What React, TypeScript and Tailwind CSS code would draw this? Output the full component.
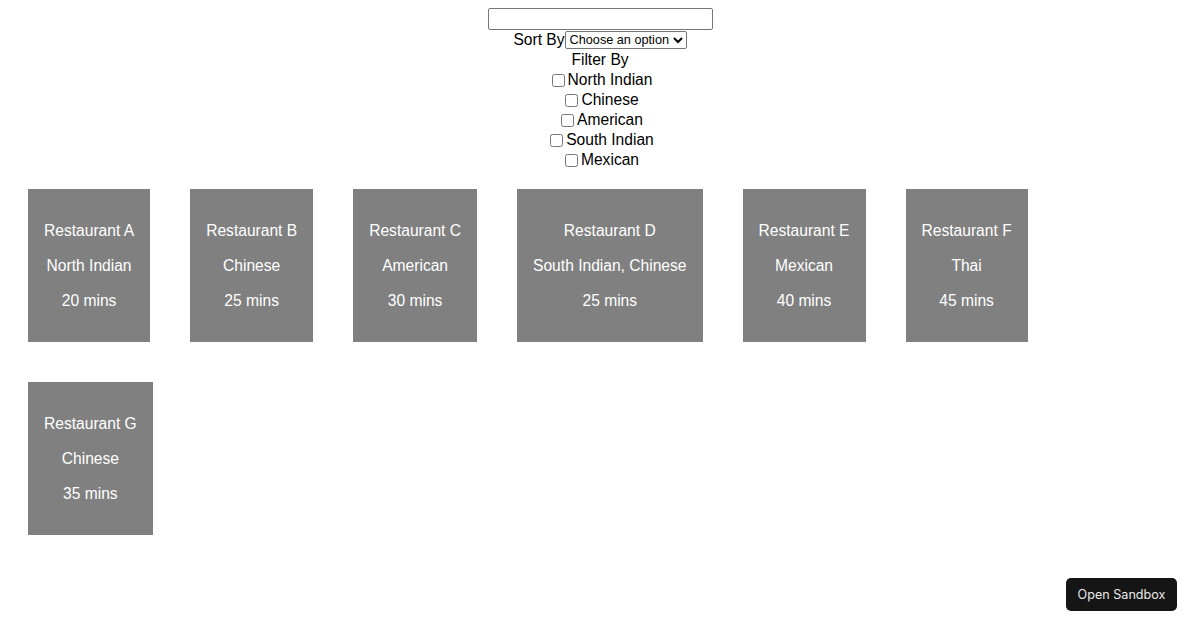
import { useState } from "react";

const restaurants = [
  { name: "Restaurant A", cuisine: "North Indian", time: "20 mins" },
  { name: "Restaurant B", cuisine: "Chinese", time: "25 mins" },
  { name: "Restaurant C", cuisine: "American", time: "30 mins" },
  { name: "Restaurant D", cuisine: "South Indian, Chinese", time: "25 mins" },
  { name: "Restaurant E", cuisine: "Mexican", time: "40 mins" },
  { name: "Restaurant F", cuisine: "Thai", time: "45 mins" },
  { name: "Restaurant G", cuisine: "Chinese", time: "35 mins" },
];

const cuisines = ["North Indian", "Chinese", "American", "South Indian", "Mexican"];

function Card({ name, cuisine, time }: { name: string; cuisine: string; time: string }) {
  return (
    <div className="m-5 p-4 bg-[#808080] text-white text-center">
      <div className="flex flex-col gap-4 py-4 leading-[19px]">
        <p>{name}</p>
        <p>{cuisine}</p>
        <p>{time}</p>
      </div>
    </div>
  );
}

export default function App() {
  const [query, setQuery] = useState("");
  const [sort, setSort] = useState("");
  return (
    <div className="min-h-[630px] bg-white p-2 text-black text-[15.6px] font-['Liberation_Sans',Arial,sans-serif]">
      <div className="flex flex-col items-center">
        <input
          type="text"
          value={query}
          onChange={(e) => setQuery(e.target.value)}
          className="w-[225px] h-[22px] border border-[#767676] rounded-[2px] bg-white px-[2px] text-[13px]"
        />
        <div className="h-[19px] flex items-center pt-[1px]">
          <span>Sort By</span>
          <select
            value={sort}
            onChange={(e) => setSort(e.target.value)}
            className="h-[18px] border border-[#767676] rounded-[2px] bg-white text-[12.7px] leading-none"
          >
            <option value="">Choose an option</option>
            <option value="time">Delivery time</option>
            <option value="name">Name</option>
          </select>
        </div>
        <div className="h-[20px] flex items-center pt-[2px]">Filter By</div>
        {cuisines.map((c) => (
          <label key={c} className="h-[20px] flex items-center pt-[2px]">
            <input type="checkbox" className="ml-[4px] mr-[3px] my-[3px] w-[13px] h-[13px]" />
            <span>{c}</span>
          </label>
        ))}
      </div>
      <div className="flex flex-wrap items-start">
        {restaurants.map((r) => (
          <Card key={r.name} {...r} />
        ))}
      </div>
      <button className="fixed bottom-[19px] right-[23px] h-[33px] w-[111px] pt-[2px] rounded-[5px] bg-[#151515] text-[12.6px] leading-none text-[#eaeaea] font-['Inter',sans-serif]">
        Open Sandbox
      </button>
    </div>
  );
}
